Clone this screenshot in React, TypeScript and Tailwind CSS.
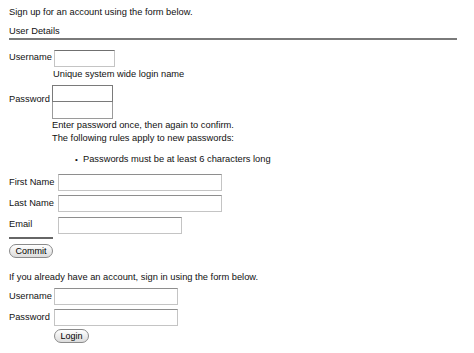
import React from "react";

const inputCls =
  "block h-[17px] bg-white border border-[#c4c4c4] border-t-[#8e8e8e] box-border";

function Btn({ label, w }: { label: string; w: string }) {
  return (
    <button
      className={`${w} h-[14px] rounded-full border border-[#8a8a8a] bg-gradient-to-b from-white to-[#dcdcdc] text-[9px] leading-[12px] text-black flex items-center justify-center p-0`}
    >
      {label}
    </button>
  );
}

export default function App() {
  return (
    <div
      className="w-[474px] h-[353px] bg-white text-[#111] text-[9.3px] leading-[13px] pl-[9px] overflow-hidden"
      style={{ fontFamily: '"Liberation Sans", Arial, Helvetica, sans-serif' }}
    >
      <div className="h-[24px] flex items-center">Sign up for an account using the form below.</div>
      <div className="h-[14px] flex items-center">User Details</div>
      <div className="w-[448px] h-[2px] bg-[#7a7a7a]" />

      <div className="mt-[10px] flex items-center h-[17px]">
        <div className="w-[45px] mb-[2px]">Username</div>
        <input className={`${inputCls} w-[61px] border-[#9a9a9a] border-t-[#707070]`} />
      </div>
      <div className="h-[14px] flex items-center pl-[44px]">Unique system wide login name</div>

      <div className="mt-[4px] flex items-center">
        <div className="w-[43px] mb-[5px]">Password</div>
        <div className="flex flex-col">
          <input className="block w-[61px] h-[17px] border border-[#7a7a7a] bg-white box-border" />
          <input className="block w-[61px] h-[17px] border border-t-0 border-[#9a9a9a] bg-white box-border" />
        </div>
      </div>
      <div className="pl-[43px]">
        <div className="h-[13px]">Enter password once, then again to confirm.</div>
        <div className="h-[13px]">The following rules apply to new passwords:</div>
      </div>
      <ul className="mt-[8px] pl-[66px]">
        <li className="h-[13px] flex items-center">
          <span className="w-[8px] text-[8px]">•</span>
          <span>Passwords must be at least 6 characters long</span>
        </li>
      </ul>

      <div className="mt-[8px] flex flex-col gap-[4px]">
        <div className="flex items-center h-[17px]">
          <div className="w-[49px]">First Name</div>
          <input className={`${inputCls} w-[164px]`} />
        </div>
        <div className="flex items-center h-[17px]">
          <div className="w-[49px]">Last Name</div>
          <input className={`${inputCls} w-[164px]`} />
        </div>
        <div className="flex items-center h-[17px] mt-[1px]">
          <div className="w-[49px] mb-[3px]">Email</div>
          <input className={`${inputCls} w-[124px]`} />
        </div>
      </div>
      <div className="mt-[3px] w-[44px] h-[2px] bg-[#666]" />
      <div className="mt-[5px]">
        <Btn label="Commit" w="w-[44px]" />
      </div>

      <div className="mt-[13px] h-[13px]">If you already have an account, sign in using the form below.</div>
      <div className="mt-[4px] flex flex-col gap-[4px]">
        <div className="flex items-center h-[17px]">
          <div className="w-[45px]">Username</div>
          <input className={`${inputCls} w-[124px]`} />
        </div>
        <div className="flex items-center h-[17px]">
          <div className="w-[45px]">Password</div>
          <input type="password" className={`${inputCls} w-[124px]`} />
        </div>
      </div>
      <div className="mt-[3px] pl-[45px]">
        <Btn label="Login" w="w-[35px]" />
      </div>
    </div>
  );
}
